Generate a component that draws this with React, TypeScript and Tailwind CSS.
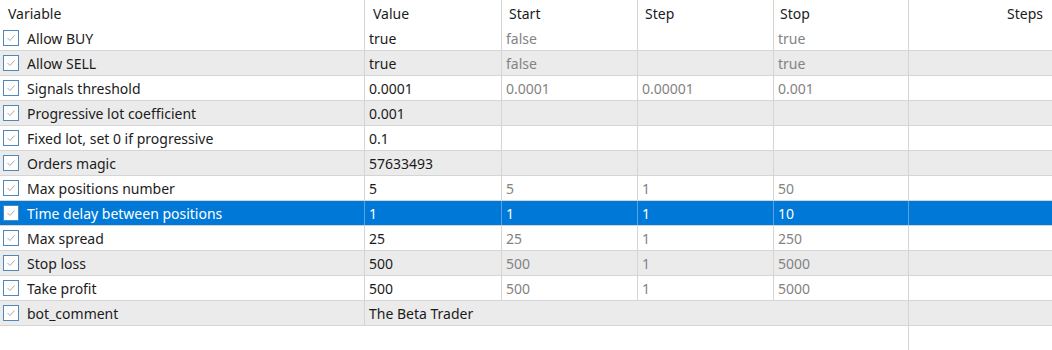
import React from 'react';

type Row = {
  name: string;
  value: string;
  start?: string;
  step?: string;
  stop?: string;
  span?: boolean;
};

const rows: Row[] = [
  { name: 'Allow BUY', value: 'true', start: 'false', step: '', stop: 'true' },
  { name: 'Allow SELL', value: 'true', start: 'false', step: '', stop: 'true' },
  { name: 'Signals threshold', value: '0.0001', start: '0.0001', step: '0.00001', stop: '0.001' },
  { name: 'Progressive lot coefficient', value: '0.001' },
  { name: 'Fixed lot, set 0 if progressive', value: '0.1' },
  { name: 'Orders magic', value: '57633493' },
  { name: 'Max positions number', value: '5', start: '5', step: '1', stop: '50' },
  { name: 'Time delay between positions', value: '1', start: '1', step: '1', stop: '10' },
  { name: 'Max spread', value: '25', start: '25', step: '1', stop: '250' },
  { name: 'Stop loss', value: '500', start: '500', step: '1', stop: '5000' },
  { name: 'Take profit', value: '500', start: '500', step: '1', stop: '5000' },
  { name: 'bot_comment', value: 'The Beta Trader', span: true },
];

const SELECTED = 7;

function CheckBox() {
  return (
    <svg width="16" height="16" viewBox="0 0 16 16" className="shrink-0">
      <rect x="0.5" y="0.5" width="15" height="15" fill="#ffffff" stroke="#4f88bb" />
      <polyline points="4.5,8 7,10.5 11.5,5.5" fill="none" stroke="#a9a9a9" strokeWidth="1" />
    </svg>
  );
}

export default function App() {
  return (
    <div
      className="w-[1052px] h-[350px] bg-white overflow-hidden text-[14px] text-[#1b1b1b]"
      style={{ fontFamily: '"Noto Sans", "Open Sans", sans-serif' }}
    >
      {/* Header */}
      <div className="flex h-[26px] items-center">
        <div className="w-[365px] h-full border-r border-[#d5d5d5] pl-[8px] flex items-center">Variable</div>
        <div className="w-[137px] h-full border-r border-[#d5d5d5] pl-[8px] flex items-center">Value</div>
        <div className="w-[136px] h-full border-r border-[#d5d5d5] pl-[7px] flex items-center">Start</div>
        <div className="w-[136px] h-full border-r border-[#d5d5d5] pl-[7px] flex items-center">Step</div>
        <div className="w-[135px] h-full border-r border-[#d5d5d5] pl-[6px] flex items-center">Stop</div>
        <div className="flex-1 h-full pr-[9px] flex items-center justify-end">Steps</div>
      </div>

      {/* Rows */}
      {rows.map((r, i) => {
        const sel = i === SELECTED;
        const bg = sel ? 'bg-[#0078d7] text-white' : i % 2 === 1 ? 'bg-[#ebebeb]' : 'bg-white';
        const line = sel ? 'border-[#5aa2e4]' : 'border-[#d5d5d5]';
        const dim = sel ? 'text-white' : 'text-[#838383]';
        return (
          <div key={r.name} className={`flex h-[25px] border-b border-[#d5d5d5] ${bg}`}>
            <div className={`w-[365px] border-r ${line} pl-[3px] flex items-center gap-[8px]`}>
              <CheckBox />
              <span>{r.name}</span>
            </div>
            {r.span ? (
              <div className={`w-[544px] border-r ${line} pl-[4px] flex items-center`}>{r.value}</div>
            ) : (
              <>
                <div className={`w-[137px] border-r ${line} pl-[4px] flex items-center`}>{r.value}</div>
                <div className={`w-[136px] border-r ${line} pl-[4px] flex items-center ${dim}`}>{r.start}</div>
                <div className={`w-[136px] border-r ${line} pl-[4px] flex items-center ${dim}`}>{r.step}</div>
                <div className={`w-[135px] border-r ${line} pl-[4px] flex items-center ${dim}`}>{r.stop}</div>
              </>
            )}
            <div className="flex-1" />
          </div>
        );
      })}

      {/* Empty area below */}
      <div className="flex h-[24px]">
        <div className="w-[909px] border-r border-[#d5d5d5]" />
        <div className="flex-1" />
      </div>
    </div>
  );
}
